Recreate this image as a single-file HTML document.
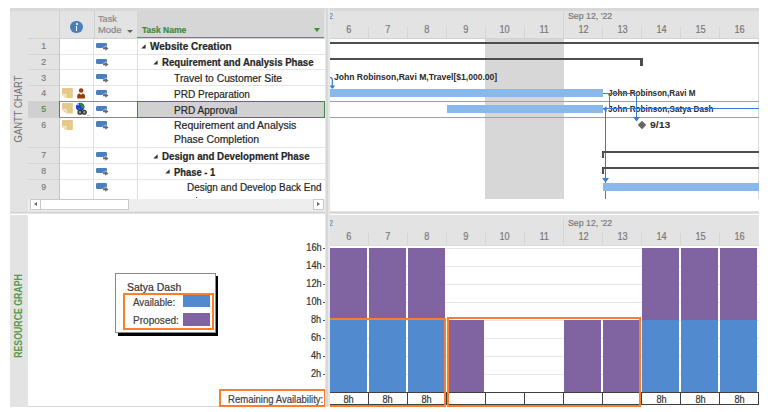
<!DOCTYPE html>
<html><head><meta charset="utf-8"><style>
html,body{margin:0;padding:0;background:#fff;}
#root{position:relative;width:768px;height:412px;overflow:hidden;background:#fff;font-family:"Liberation Sans",sans-serif;}
#root>div,#root>svg{position:absolute;white-space:nowrap;}
</style></head><body><div id="root">
<div style="left:10.00px;top:8.00px;width:749.00px;height:203.00px;background:#e3e3e3;"></div>
<div style="left:10.00px;top:8.00px;width:749.00px;height:2.50px;background:#d9d9d9;"></div>
<div style="left:-16.37px;top:99.40px;width:70.75px;height:20px;line-height:20px;font-size:10px;font-weight:400;color:#707070;text-align:center;transform-origin:50% 50%;transform:rotate(-90deg) scaleX(0.9442);">GANTT CHART</div>
<div style="left:59.00px;top:38.50px;width:266.00px;height:160.00px;background:#ffffff;"></div>
<div style="left:59.00px;top:10.50px;width:1.00px;height:28.00px;background:#d0d0d0;"></div>
<div style="left:93.50px;top:10.50px;width:1.00px;height:28.00px;background:#d0d0d0;"></div>
<div style="left:137.30px;top:10.50px;width:187.20px;height:28.00px;background:#d6d6d6;"></div>
<div style="left:137.30px;top:36.80px;width:187.20px;height:2.00px;background:#4c9a4c;"></div>
<div style="left:28.00px;top:38.00px;width:109.30px;height:1.00px;background:#cfcfcf;"></div>
<div style="left:28.00px;top:53.70px;width:31.00px;height:1.00px;background:#d4d4d4;"></div>
<div style="left:59.00px;top:53.70px;width:266.00px;height:1.00px;background:#e6e6e6;"></div>
<div style="left:28.00px;top:69.40px;width:31.00px;height:1.00px;background:#d4d4d4;"></div>
<div style="left:59.00px;top:69.40px;width:266.00px;height:1.00px;background:#e6e6e6;"></div>
<div style="left:28.00px;top:85.10px;width:31.00px;height:1.00px;background:#d4d4d4;"></div>
<div style="left:59.00px;top:85.10px;width:266.00px;height:1.00px;background:#e6e6e6;"></div>
<div style="left:28.00px;top:100.80px;width:31.00px;height:1.00px;background:#d4d4d4;"></div>
<div style="left:59.00px;top:100.80px;width:266.00px;height:1.00px;background:#e6e6e6;"></div>
<div style="left:28.00px;top:116.60px;width:31.00px;height:1.00px;background:#d4d4d4;"></div>
<div style="left:59.00px;top:116.60px;width:266.00px;height:1.00px;background:#e6e6e6;"></div>
<div style="left:28.00px;top:147.30px;width:31.00px;height:1.00px;background:#d4d4d4;"></div>
<div style="left:59.00px;top:147.30px;width:266.00px;height:1.00px;background:#e6e6e6;"></div>
<div style="left:28.00px;top:162.90px;width:31.00px;height:1.00px;background:#d4d4d4;"></div>
<div style="left:59.00px;top:162.90px;width:266.00px;height:1.00px;background:#e6e6e6;"></div>
<div style="left:28.00px;top:178.70px;width:31.00px;height:1.00px;background:#d4d4d4;"></div>
<div style="left:59.00px;top:178.70px;width:266.00px;height:1.00px;background:#e6e6e6;"></div>
<div style="left:59.00px;top:38.50px;width:1.00px;height:160.00px;background:#c5c5c5;"></div>
<div style="left:93.00px;top:38.50px;width:1.00px;height:160.00px;background:#dedede;"></div>
<div style="left:136.80px;top:38.50px;width:1.00px;height:160.00px;background:#dedede;"></div>
<div style="left:28.00px;top:101.30px;width:31.00px;height:15.80px;background:#d0d0d0;"></div>
<div style="left:59.00px;top:100.90px;width:78.00px;height:1.00px;background:#8a8a8a;"></div>
<div style="left:59.00px;top:116.70px;width:78.00px;height:1.00px;background:#8a8a8a;"></div>
<div style="left:58.70px;top:101.30px;width:1.60px;height:16.10px;background:#3e8e3e;"></div>
<div style="left:136.80px;top:100.90px;width:188.20px;height:17.30px;background:#d1d1d1;box-sizing:border-box;border:1.8px solid #418541;"></div>
<div style="left:97.50px;top:9.00px;height:20px;line-height:20px;font-size:9.024400000000002px;font-weight:400;color:#8a8a8a;transform-origin:0 50%;transform:scaleX(1.0240);-webkit-text-stroke:0.2px #8a8a8a;">Task</div>
<div style="left:97.50px;top:20.00px;height:20px;line-height:20px;font-size:9.024400000000002px;font-weight:400;color:#8a8a8a;transform-origin:0 50%;transform:scaleX(1.0411);-webkit-text-stroke:0.2px #8a8a8a;">Mode</div>
<div style="left:127.4px;top:29.8px;width:0;height:0;border-left:3px solid transparent;border-right:3px solid transparent;border-top:3.5px solid #606060;"></div>
<div style="left:142.00px;top:20.00px;height:20px;line-height:20px;font-size:8.6px;font-weight:700;color:#3f8a3f;transform-origin:0 50%;transform:scaleX(0.9872);-webkit-text-stroke:0.2px #3f8a3f;">Task Name</div>
<div style="left:313.5px;top:28px;width:0;height:0;border-left:3.5px solid transparent;border-right:3.5px solid transparent;border-top:4px solid #3f8f3f;"></div>
<div style="left:70.4px;top:20.6px;width:12.4px;height:12.4px;border-radius:50%;background:#4a7fbe;"></div>
<div style="left:75.5px;top:23.3px;width:2.2px;height:1.9px;border-radius:0.8px;background:#fff;"></div>
<div style="left:75.8px;top:26.3px;width:1.7px;height:4.8px;background:#fff;"></div>
<div style="left:41.49px;top:36.00px;width:5.42px;height:20px;line-height:20px;font-size:9.74225px;font-weight:400;color:#7c7c7c;transform-origin:50% 50%;transform:scaleX(0.9000);text-align:center;-webkit-text-stroke:0.2px #7c7c7c;">1</div>
<div style="left:41.49px;top:52.00px;width:5.42px;height:20px;line-height:20px;font-size:9.74225px;font-weight:400;color:#7c7c7c;transform-origin:50% 50%;transform:scaleX(0.9000);text-align:center;-webkit-text-stroke:0.2px #7c7c7c;">2</div>
<div style="left:41.49px;top:68.00px;width:5.42px;height:20px;line-height:20px;font-size:9.74225px;font-weight:400;color:#7c7c7c;transform-origin:50% 50%;transform:scaleX(0.9000);text-align:center;-webkit-text-stroke:0.2px #7c7c7c;">3</div>
<div style="left:41.49px;top:83.00px;width:5.42px;height:20px;line-height:20px;font-size:9.74225px;font-weight:400;color:#7c7c7c;transform-origin:50% 50%;transform:scaleX(0.9000);text-align:center;-webkit-text-stroke:0.2px #7c7c7c;">4</div>
<div style="left:41.49px;top:99.00px;width:5.42px;height:20px;line-height:20px;font-size:9.74225px;font-weight:400;color:#4e8a3a;transform-origin:50% 50%;transform:scaleX(0.9000);text-align:center;-webkit-text-stroke:0.2px #4e8a3a;">5</div>
<div style="left:41.49px;top:115.00px;width:5.42px;height:20px;line-height:20px;font-size:9.74225px;font-weight:400;color:#7c7c7c;transform-origin:50% 50%;transform:scaleX(0.9000);text-align:center;-webkit-text-stroke:0.2px #7c7c7c;">6</div>
<div style="left:41.49px;top:145.00px;width:5.42px;height:20px;line-height:20px;font-size:9.74225px;font-weight:400;color:#7c7c7c;transform-origin:50% 50%;transform:scaleX(0.9000);text-align:center;-webkit-text-stroke:0.2px #7c7c7c;">7</div>
<div style="left:41.49px;top:161.00px;width:5.42px;height:20px;line-height:20px;font-size:9.74225px;font-weight:400;color:#7c7c7c;transform-origin:50% 50%;transform:scaleX(0.9000);text-align:center;-webkit-text-stroke:0.2px #7c7c7c;">8</div>
<div style="left:41.49px;top:177.00px;width:5.42px;height:20px;line-height:20px;font-size:9.74225px;font-weight:400;color:#7c7c7c;transform-origin:50% 50%;transform:scaleX(0.9000);text-align:center;-webkit-text-stroke:0.2px #7c7c7c;">9</div>
<div style="left:95.9px;top:42.90px;width:11px;height:5.2px;border-radius:1.3px;background:#4a7fbf;"></div>
<svg style="left:101.7px;top:45.30px;" width="7.5" height="6.8" viewBox="0 0 7.5 6.8"><path d="M1 2.35H3.3V1L6.5 3.4L3.3 5.8V4.35H1Z" fill="#6a6a6a" stroke="#fff" stroke-width="0.9" paint-order="stroke" stroke-linejoin="round"/></svg>
<div style="left:95.9px;top:58.60px;width:11px;height:5.2px;border-radius:1.3px;background:#4a7fbf;"></div>
<svg style="left:101.7px;top:61.00px;" width="7.5" height="6.8" viewBox="0 0 7.5 6.8"><path d="M1 2.35H3.3V1L6.5 3.4L3.3 5.8V4.35H1Z" fill="#6a6a6a" stroke="#fff" stroke-width="0.9" paint-order="stroke" stroke-linejoin="round"/></svg>
<div style="left:95.9px;top:74.30px;width:11px;height:5.2px;border-radius:1.3px;background:#4a7fbf;"></div>
<svg style="left:101.7px;top:76.70px;" width="7.5" height="6.8" viewBox="0 0 7.5 6.8"><path d="M1 2.35H3.3V1L6.5 3.4L3.3 5.8V4.35H1Z" fill="#6a6a6a" stroke="#fff" stroke-width="0.9" paint-order="stroke" stroke-linejoin="round"/></svg>
<div style="left:95.9px;top:90.00px;width:11px;height:5.2px;border-radius:1.3px;background:#4a7fbf;"></div>
<svg style="left:101.7px;top:92.40px;" width="7.5" height="6.8" viewBox="0 0 7.5 6.8"><path d="M1 2.35H3.3V1L6.5 3.4L3.3 5.8V4.35H1Z" fill="#6a6a6a" stroke="#fff" stroke-width="0.9" paint-order="stroke" stroke-linejoin="round"/></svg>
<div style="left:95.9px;top:105.70px;width:11px;height:5.2px;border-radius:1.3px;background:#4a7fbf;"></div>
<svg style="left:101.7px;top:108.10px;" width="7.5" height="6.8" viewBox="0 0 7.5 6.8"><path d="M1 2.35H3.3V1L6.5 3.4L3.3 5.8V4.35H1Z" fill="#6a6a6a" stroke="#fff" stroke-width="0.9" paint-order="stroke" stroke-linejoin="round"/></svg>
<div style="left:95.9px;top:121.40px;width:11px;height:5.2px;border-radius:1.3px;background:#4a7fbf;"></div>
<svg style="left:101.7px;top:123.80px;" width="7.5" height="6.8" viewBox="0 0 7.5 6.8"><path d="M1 2.35H3.3V1L6.5 3.4L3.3 5.8V4.35H1Z" fill="#6a6a6a" stroke="#fff" stroke-width="0.9" paint-order="stroke" stroke-linejoin="round"/></svg>
<div style="left:95.9px;top:152.10px;width:11px;height:5.2px;border-radius:1.3px;background:#4a7fbf;"></div>
<svg style="left:101.7px;top:154.50px;" width="7.5" height="6.8" viewBox="0 0 7.5 6.8"><path d="M1 2.35H3.3V1L6.5 3.4L3.3 5.8V4.35H1Z" fill="#6a6a6a" stroke="#fff" stroke-width="0.9" paint-order="stroke" stroke-linejoin="round"/></svg>
<div style="left:95.9px;top:167.80px;width:11px;height:5.2px;border-radius:1.3px;background:#4a7fbf;"></div>
<svg style="left:101.7px;top:170.20px;" width="7.5" height="6.8" viewBox="0 0 7.5 6.8"><path d="M1 2.35H3.3V1L6.5 3.4L3.3 5.8V4.35H1Z" fill="#6a6a6a" stroke="#fff" stroke-width="0.9" paint-order="stroke" stroke-linejoin="round"/></svg>
<div style="left:95.9px;top:183.40px;width:11px;height:5.2px;border-radius:1.3px;background:#4a7fbf;"></div>
<svg style="left:101.7px;top:185.80px;" width="7.5" height="6.8" viewBox="0 0 7.5 6.8"><path d="M1 2.35H3.3V1L6.5 3.4L3.3 5.8V4.35H1Z" fill="#6a6a6a" stroke="#fff" stroke-width="0.9" paint-order="stroke" stroke-linejoin="round"/></svg>
<svg style="left:62.1px;top:87.9px;" width="11" height="10.6" viewBox="0 0 11 10.6"><path d="M0 0H10.8V10.4H3.9L0 6.6Z" fill="#e6c88a"/><path d="M0.7 6.7H4V10.1" fill="none" stroke="#fff" stroke-width="0.9"/></svg>
<svg style="left:62.1px;top:103.3px;" width="11" height="10.6" viewBox="0 0 11 10.6"><path d="M0 0H10.8V10.4H3.9L0 6.6Z" fill="#e6c88a"/><path d="M0.7 6.7H4V10.1" fill="none" stroke="#fff" stroke-width="0.9"/></svg>
<svg style="left:62.1px;top:119.8px;" width="11" height="10.6" viewBox="0 0 11 10.6"><path d="M0 0H10.8V10.4H3.9L0 6.6Z" fill="#e6c88a"/><path d="M0.7 6.7H4V10.1" fill="none" stroke="#fff" stroke-width="0.9"/></svg>
<svg style="left:77px;top:87.6px;" width="9" height="11" viewBox="0 0 9 11"><circle cx="4.1" cy="2.6" r="2.25" fill="#9e3a0a"/><path d="M0.2 9.4V8.2Q0.2 5.6 2.9 5.4L4.1 6.9L5.3 5.4Q8 5.6 8 8.2V9.4Q8 10.6 6.6 10.6H1.6Q0.2 10.6 0.2 9.4Z" fill="#9e3a0a"/></svg>
<svg style="left:74.5px;top:102px;" width="13" height="15" viewBox="0 0 13 15"><circle cx="5.15" cy="5" r="4.3" fill="#2233ee"/><path d="M4.5 1.2Q7.5 0.6 9.2 3.6Q9.6 5.5 8.8 6.8Q7.6 6.2 6.6 6.6Q5.2 5.6 6.2 4.4Q4.8 3.6 4.5 1.2Z" fill="#2f8a2a"/><path d="M3.4 4.8Q4.6 5.8 5.8 7.2Q5 8.6 3.4 8.2Q2.6 6.6 3.4 4.8Z" fill="#3a8a30" opacity="0.7"/><circle cx="3" cy="2.4" r="1.1" fill="#c8d8ff" opacity="0.8"/><circle cx="4.9" cy="10.2" r="1.9" fill="#9a9a9a" stroke="#333" stroke-width="1.3"/><circle cx="9.3" cy="10.2" r="1.9" fill="#9a9a9a" stroke="#333" stroke-width="1.3"/><path d="M6.8 10.2H7.4" stroke="#3c3c3c" stroke-width="1.2"/></svg>
<div style="left:87px;top:115px;width:3.3px;height:1.2px;background:#c4c4c4;"></div>
<svg style="left:141.3px;top:44.3px;" width="5" height="5" viewBox="0 0 5 5"><path d="M4.6 0.3V4.6H0.3Z" fill="#303030"/></svg>
<div style="left:150.20px;top:37.00px;height:20px;line-height:20px;font-size:10.049900000000001px;font-weight:700;color:#262626;transform-origin:0 50%;transform:scaleX(0.9988);-webkit-text-stroke:0.2px #262626;">Website Creation</div>
<svg style="left:153px;top:60px;" width="5" height="5" viewBox="0 0 5 5"><path d="M4.6 0.3V4.6H0.3Z" fill="#303030"/></svg>
<div style="left:162.20px;top:53.00px;height:20px;line-height:20px;font-size:10.049900000000001px;font-weight:700;color:#262626;transform-origin:0 50%;transform:scaleX(0.9593);-webkit-text-stroke:0.2px #262626;">Requirement and Analysis Phase</div>
<div style="left:174.20px;top:69.00px;height:20px;line-height:20px;font-size:10.049900000000001px;font-weight:400;color:#262626;transform-origin:0 50%;transform:scaleX(1.0297);-webkit-text-stroke:0.2px #262626;">Travel to Customer Site</div>
<div style="left:174.20px;top:85.00px;height:20px;line-height:20px;font-size:10.049900000000001px;font-weight:400;color:#262626;transform-origin:0 50%;transform:scaleX(1.0018);-webkit-text-stroke:0.2px #262626;">PRD Preparation</div>
<div style="left:174.20px;top:101.00px;height:20px;line-height:20px;font-size:10.049900000000001px;font-weight:400;color:#262626;transform-origin:0 50%;transform:scaleX(1.0029);-webkit-text-stroke:0.2px #262626;">PRD Approval</div>
<div style="left:174.20px;top:116.00px;height:20px;line-height:20px;font-size:10.049900000000001px;font-weight:400;color:#262626;transform-origin:0 50%;transform:scaleX(1.0493);-webkit-text-stroke:0.2px #262626;">Requirement and Analysis</div>
<div style="left:174.20px;top:130.00px;height:20px;line-height:20px;font-size:10.049900000000001px;font-weight:400;color:#262626;transform-origin:0 50%;transform:scaleX(1.0375);-webkit-text-stroke:0.2px #262626;">Phase Completion</div>
<svg style="left:153px;top:153.8px;" width="5" height="5" viewBox="0 0 5 5"><path d="M4.6 0.3V4.6H0.3Z" fill="#303030"/></svg>
<div style="left:162.00px;top:147.00px;height:20px;line-height:20px;font-size:10.049900000000001px;font-weight:700;color:#262626;transform-origin:0 50%;transform:scaleX(0.9695);-webkit-text-stroke:0.2px #262626;">Design and Development Phase</div>
<svg style="left:165px;top:169.4px;" width="5" height="5" viewBox="0 0 5 5"><path d="M4.6 0.3V4.6H0.3Z" fill="#303030"/></svg>
<div style="left:174.20px;top:163.00px;height:20px;line-height:20px;font-size:10.049900000000001px;font-weight:700;color:#262626;transform-origin:0 50%;transform:scaleX(0.9359);-webkit-text-stroke:0.2px #262626;">Phase - 1</div>
<div style="left:186.80px;top:178.00px;height:20px;line-height:20px;font-size:10.049900000000001px;font-weight:400;color:#262626;transform-origin:0 50%;transform:scaleX(0.9882);-webkit-text-stroke:0.2px #262626;">Design and Develop Back End</div>
<div style="left:196px;top:196.6px;width:1.2px;height:1.2px;background:#555;"></div>
<div style="left:28.00px;top:198.50px;width:297.00px;height:12.50px;background:#eeeeee;"></div>
<div style="left:29.90px;top:198.80px;width:11.00px;height:11.60px;background:#ffffff;box-sizing:border-box;border:1px solid #c9c9c9;"></div>
<div style="left:33.8px;top:202px;width:0;height:0;border-top:2.6px solid transparent;border-bottom:2.6px solid transparent;border-right:3.2px solid #666;"></div>
<div style="left:40.40px;top:198.80px;width:88.40px;height:11.60px;background:#ffffff;box-sizing:border-box;border:1px solid #c9c9c9;"></div>
<div style="left:313.00px;top:198.80px;width:11.00px;height:11.60px;background:#ffffff;box-sizing:border-box;border:1px solid #c9c9c9;"></div>
<div style="left:317.2px;top:201.8px;width:0;height:0;border-top:2.9px solid transparent;border-bottom:2.9px solid transparent;border-left:3.3px solid #666;"></div>
<div style="left:329.37px;top:38.50px;width:429.63px;height:172.70px;background:#ffffff;"></div>
<div style="left:28.00px;top:37.60px;width:297.30px;height:1.00px;background:#d2d2d2;"></div>
<div style="left:329.37px;top:37.60px;width:429.63px;height:1.00px;background:#d2d2d2;"></div>
<div style="left:485.49px;top:38.50px;width:78.06px;height:160.00px;background:#d7d7d7;"></div>
<div style="left:758.00px;top:38.50px;width:1.00px;height:160.00px;background:#dcdcdc;"></div>
<div style="left:346.10px;top:20.00px;width:5.56px;height:20px;line-height:20px;font-size:10.0px;font-weight:400;color:#7a7a7a;transform-origin:50% 50%;transform:scaleX(0.9200);text-align:center;-webkit-text-stroke:0.2px #7a7a7a;">6</div>
<div style="left:385.13px;top:20.00px;width:5.56px;height:20px;line-height:20px;font-size:10.0px;font-weight:400;color:#7a7a7a;transform-origin:50% 50%;transform:scaleX(0.9200);text-align:center;-webkit-text-stroke:0.2px #7a7a7a;">7</div>
<div style="left:367.90px;top:26.50px;width:1.00px;height:11.50px;background:#d5d5d5;"></div>
<div style="left:424.16px;top:20.00px;width:5.56px;height:20px;line-height:20px;font-size:10.0px;font-weight:400;color:#7a7a7a;transform-origin:50% 50%;transform:scaleX(0.9200);text-align:center;-webkit-text-stroke:0.2px #7a7a7a;">8</div>
<div style="left:406.93px;top:26.50px;width:1.00px;height:11.50px;background:#d5d5d5;"></div>
<div style="left:463.19px;top:20.00px;width:5.56px;height:20px;line-height:20px;font-size:10.0px;font-weight:400;color:#7a7a7a;transform-origin:50% 50%;transform:scaleX(0.9200);text-align:center;-webkit-text-stroke:0.2px #7a7a7a;">9</div>
<div style="left:445.96px;top:26.50px;width:1.00px;height:11.50px;background:#d5d5d5;"></div>
<div style="left:499.44px;top:20.00px;width:11.12px;height:20px;line-height:20px;font-size:10.0px;font-weight:400;color:#7a7a7a;transform-origin:50% 50%;transform:scaleX(0.9200);text-align:center;-webkit-text-stroke:0.2px #7a7a7a;">10</div>
<div style="left:484.99px;top:26.50px;width:1.00px;height:11.50px;background:#d5d5d5;"></div>
<div style="left:538.85px;top:20.00px;width:10.38px;height:20px;line-height:20px;font-size:10.0px;font-weight:400;color:#7a7a7a;transform-origin:50% 50%;transform:scaleX(0.9200);text-align:center;-webkit-text-stroke:0.2px #7a7a7a;">11</div>
<div style="left:524.02px;top:26.50px;width:1.00px;height:11.50px;background:#d5d5d5;"></div>
<div style="left:577.50px;top:20.00px;width:11.12px;height:20px;line-height:20px;font-size:10.0px;font-weight:400;color:#7a7a7a;transform-origin:50% 50%;transform:scaleX(0.9200);text-align:center;-webkit-text-stroke:0.2px #7a7a7a;">12</div>
<div style="left:563.05px;top:26.50px;width:1.00px;height:11.50px;background:#d5d5d5;"></div>
<div style="left:616.53px;top:20.00px;width:11.12px;height:20px;line-height:20px;font-size:10.0px;font-weight:400;color:#7a7a7a;transform-origin:50% 50%;transform:scaleX(0.9200);text-align:center;-webkit-text-stroke:0.2px #7a7a7a;">13</div>
<div style="left:602.08px;top:26.50px;width:1.00px;height:11.50px;background:#d5d5d5;"></div>
<div style="left:655.56px;top:20.00px;width:11.12px;height:20px;line-height:20px;font-size:10.0px;font-weight:400;color:#7a7a7a;transform-origin:50% 50%;transform:scaleX(0.9200);text-align:center;-webkit-text-stroke:0.2px #7a7a7a;">14</div>
<div style="left:641.11px;top:26.50px;width:1.00px;height:11.50px;background:#d5d5d5;"></div>
<div style="left:694.59px;top:20.00px;width:11.12px;height:20px;line-height:20px;font-size:10.0px;font-weight:400;color:#7a7a7a;transform-origin:50% 50%;transform:scaleX(0.9200);text-align:center;-webkit-text-stroke:0.2px #7a7a7a;">15</div>
<div style="left:680.14px;top:26.50px;width:1.00px;height:11.50px;background:#d5d5d5;"></div>
<div style="left:733.62px;top:20.00px;width:11.12px;height:20px;line-height:20px;font-size:10.0px;font-weight:400;color:#7a7a7a;transform-origin:50% 50%;transform:scaleX(0.9200);text-align:center;-webkit-text-stroke:0.2px #7a7a7a;">16</div>
<div style="left:719.17px;top:26.50px;width:1.00px;height:11.50px;background:#d5d5d5;"></div>
<div style="left:563.05px;top:12.00px;width:1.00px;height:26.00px;background:#d5d5d5;"></div>
<div style="left:567.60px;top:6.00px;height:20px;line-height:20px;font-size:9.2px;font-weight:400;color:#7a7a7a;transform-origin:0 50%;transform:scaleX(0.9555);-webkit-text-stroke:0.2px #7a7a7a;">Sep 12, '22</div>
<div style="left:329.40px;top:6.00px;height:20px;line-height:20px;font-size:9.2px;font-weight:400;color:#7a8aa0;transform-origin:0 50%;transform:scaleX(0.7819);-webkit-text-stroke:0.2px #7a8aa0;">2</div>
<div style="left:329.37px;top:41.80px;width:429.63px;height:2.00px;background:#4d4d4d;"></div>
<div style="left:329.37px;top:57.80px;width:313.43px;height:2.00px;background:#4d4d4d;"></div>
<div style="left:640.40px;top:57.80px;width:2.40px;height:8.20px;background:#4d4d4d;"></div>
<div style="left:334.20px;top:67.00px;height:20px;line-height:20px;font-size:9.600200000000001px;font-weight:700;color:#2a2a2a;transform-origin:0 50%;transform:scaleX(0.8924);">John Robinson,Ravi M,Travel[$1,000.00]</div>
<div style="left:329.37px;top:89.20px;width:273.63px;height:7.80px;background:#8ab8ea;"></div>
<div style="left:329.37px;top:101.00px;width:429.63px;height:1.00px;background:#a0a0a0;"></div>
<div style="left:329.37px;top:116.60px;width:429.63px;height:1.00px;background:#a0a0a0;"></div>
<div style="left:446.60px;top:105.20px;width:156.40px;height:7.80px;background:#8ab8ea;"></div>
<div style="left:607.50px;top:83.00px;height:20px;line-height:20px;font-size:9.600200000000001px;font-weight:700;color:#2a2a2a;transform-origin:0 50%;transform:scaleX(0.8457);">John Robinson,Ravi M</div>
<div style="left:607.50px;top:99.00px;height:20px;line-height:20px;font-size:9.600200000000001px;font-weight:700;color:#2a2a2a;transform-origin:0 50%;transform:scaleX(0.8489);">John Robinson,Satya Dash</div>
<svg style="left:329px;top:74px;" width="8" height="16" viewBox="0 0 8 16"><path d="M0.5 3.3Q3.3 3.3 3.3 5.5V12" fill="none" stroke="#3a7cd0" stroke-width="1.2"/><path d="M0.4 11.4H6.2L3.3 15Z" fill="#3a7cd0"/></svg>
<div style="left:603.00px;top:108.30px;width:156.00px;height:1.00px;background:#3a7cd0;"></div>
<svg style="left:602.6px;top:105.9px;" width="4" height="6" viewBox="0 0 4 6"><path d="M0 2.95L3.6 0V5.9Z" fill="#3a7cd0"/></svg>
<div style="left:605.00px;top:110.00px;width:1.00px;height:88.50px;background:#3a7cd0;"></div>
<div style="left:608.70px;top:92.80px;width:1.00px;height:16.00px;background:#3a7cd0;"></div>
<div style="left:636.00px;top:92.80px;width:1.00px;height:25.20px;background:#3a7cd0;"></div>
<div style="left:603.00px;top:92.70px;width:34.00px;height:1.00px;background:#3a7cd0;"></div>
<svg style="left:633.2px;top:117.2px;" width="7" height="5" viewBox="0 0 7 5"><path d="M0 0H7L3.5 4.4Z" fill="#3a7cd0"/></svg>
<svg style="left:602px;top:178px;" width="7" height="5" viewBox="0 0 7 5"><path d="M0 0H7L3.5 4.4Z" fill="#3a7cd0"/></svg>
<div style="left:638.5px;top:122px;width:6px;height:6px;background:#666;transform:rotate(45deg);"></div>
<div style="left:650.20px;top:115.00px;height:20px;line-height:20px;font-size:9.600200000000001px;font-weight:700;color:#2a2a2a;transform-origin:0 50%;transform:scaleX(1.0866);">9/13</div>
<div style="left:602.00px;top:151.40px;width:157.00px;height:2.00px;background:#4d4d4d;"></div>
<div style="left:601.50px;top:151.40px;width:2.30px;height:6.60px;background:#4d4d4d;"></div>
<div style="left:602.00px;top:167.10px;width:157.00px;height:2.00px;background:#4d4d4d;"></div>
<div style="left:601.50px;top:167.10px;width:2.30px;height:6.90px;background:#4d4d4d;"></div>
<div style="left:603.00px;top:183.00px;width:156.00px;height:7.60px;background:#8ab8ea;"></div>
<div style="left:10.00px;top:211.20px;width:749.00px;height:3.30px;background:#e2e2e2;"></div>
<div style="left:10.00px;top:212.30px;width:749.00px;height:1.20px;background:#d4d4d4;"></div>
<div style="left:10.00px;top:214.50px;width:18.00px;height:192.50px;background:#e3e3e3;"></div>
<div style="left:-28.78px;top:306.40px;width:95.57px;height:20px;line-height:20px;font-size:10px;font-weight:700;color:#56984a;text-align:center;transform-origin:50% 50%;transform:rotate(-90deg) scaleX(0.8748);">RESOURCE GRAPH</div>
<div style="left:28.00px;top:214.50px;width:297.30px;height:191.50px;background:#ffffff;"></div>
<div style="left:28.00px;top:405.50px;width:297.30px;height:1.00px;background:#d8d8d8;"></div>
<div style="left:329.37px;top:214.50px;width:429.63px;height:30.50px;background:#e3e3e3;"></div>
<div style="left:329.37px;top:244.60px;width:429.63px;height:1.00px;background:#dadada;"></div>
<div style="left:346.10px;top:227.00px;width:5.56px;height:20px;line-height:20px;font-size:10.0px;font-weight:400;color:#7a7a7a;transform-origin:50% 50%;transform:scaleX(0.9200);text-align:center;-webkit-text-stroke:0.2px #7a7a7a;">6</div>
<div style="left:385.13px;top:227.00px;width:5.56px;height:20px;line-height:20px;font-size:10.0px;font-weight:400;color:#7a7a7a;transform-origin:50% 50%;transform:scaleX(0.9200);text-align:center;-webkit-text-stroke:0.2px #7a7a7a;">7</div>
<div style="left:367.90px;top:233.00px;width:1.00px;height:12.00px;background:#d5d5d5;"></div>
<div style="left:424.16px;top:227.00px;width:5.56px;height:20px;line-height:20px;font-size:10.0px;font-weight:400;color:#7a7a7a;transform-origin:50% 50%;transform:scaleX(0.9200);text-align:center;-webkit-text-stroke:0.2px #7a7a7a;">8</div>
<div style="left:406.93px;top:233.00px;width:1.00px;height:12.00px;background:#d5d5d5;"></div>
<div style="left:463.19px;top:227.00px;width:5.56px;height:20px;line-height:20px;font-size:10.0px;font-weight:400;color:#7a7a7a;transform-origin:50% 50%;transform:scaleX(0.9200);text-align:center;-webkit-text-stroke:0.2px #7a7a7a;">9</div>
<div style="left:445.96px;top:233.00px;width:1.00px;height:12.00px;background:#d5d5d5;"></div>
<div style="left:499.44px;top:227.00px;width:11.12px;height:20px;line-height:20px;font-size:10.0px;font-weight:400;color:#7a7a7a;transform-origin:50% 50%;transform:scaleX(0.9200);text-align:center;-webkit-text-stroke:0.2px #7a7a7a;">10</div>
<div style="left:484.99px;top:233.00px;width:1.00px;height:12.00px;background:#d5d5d5;"></div>
<div style="left:538.85px;top:227.00px;width:10.38px;height:20px;line-height:20px;font-size:10.0px;font-weight:400;color:#7a7a7a;transform-origin:50% 50%;transform:scaleX(0.9200);text-align:center;-webkit-text-stroke:0.2px #7a7a7a;">11</div>
<div style="left:524.02px;top:233.00px;width:1.00px;height:12.00px;background:#d5d5d5;"></div>
<div style="left:577.50px;top:227.00px;width:11.12px;height:20px;line-height:20px;font-size:10.0px;font-weight:400;color:#7a7a7a;transform-origin:50% 50%;transform:scaleX(0.9200);text-align:center;-webkit-text-stroke:0.2px #7a7a7a;">12</div>
<div style="left:563.05px;top:233.00px;width:1.00px;height:12.00px;background:#d5d5d5;"></div>
<div style="left:616.53px;top:227.00px;width:11.12px;height:20px;line-height:20px;font-size:10.0px;font-weight:400;color:#7a7a7a;transform-origin:50% 50%;transform:scaleX(0.9200);text-align:center;-webkit-text-stroke:0.2px #7a7a7a;">13</div>
<div style="left:602.08px;top:233.00px;width:1.00px;height:12.00px;background:#d5d5d5;"></div>
<div style="left:655.56px;top:227.00px;width:11.12px;height:20px;line-height:20px;font-size:10.0px;font-weight:400;color:#7a7a7a;transform-origin:50% 50%;transform:scaleX(0.9200);text-align:center;-webkit-text-stroke:0.2px #7a7a7a;">14</div>
<div style="left:641.11px;top:233.00px;width:1.00px;height:12.00px;background:#d5d5d5;"></div>
<div style="left:694.59px;top:227.00px;width:11.12px;height:20px;line-height:20px;font-size:10.0px;font-weight:400;color:#7a7a7a;transform-origin:50% 50%;transform:scaleX(0.9200);text-align:center;-webkit-text-stroke:0.2px #7a7a7a;">15</div>
<div style="left:680.14px;top:233.00px;width:1.00px;height:12.00px;background:#d5d5d5;"></div>
<div style="left:733.62px;top:227.00px;width:11.12px;height:20px;line-height:20px;font-size:10.0px;font-weight:400;color:#7a7a7a;transform-origin:50% 50%;transform:scaleX(0.9200);text-align:center;-webkit-text-stroke:0.2px #7a7a7a;">16</div>
<div style="left:719.17px;top:233.00px;width:1.00px;height:12.00px;background:#d5d5d5;"></div>
<div style="left:563.05px;top:218.50px;width:1.00px;height:26.50px;background:#d5d5d5;"></div>
<div style="left:567.60px;top:213.00px;height:20px;line-height:20px;font-size:9.2px;font-weight:400;color:#7a7a7a;transform-origin:0 50%;transform:scaleX(0.9555);-webkit-text-stroke:0.2px #7a7a7a;">Sep 12, '22</div>
<div style="left:329.40px;top:213.00px;height:20px;line-height:20px;font-size:9.2px;font-weight:400;color:#7a8aa0;transform-origin:0 50%;transform:scaleX(0.7819);-webkit-text-stroke:0.2px #7a8aa0;">2</div>
<div style="left:329.37px;top:245.60px;width:429.63px;height:160.40px;background:#ffffff;"></div>
<div style="left:329.37px;top:247.50px;width:429.63px;height:1.00px;background:#e6e6e6;"></div>
<div style="left:329.37px;top:265.50px;width:429.63px;height:1.00px;background:#e6e6e6;"></div>
<div style="left:329.37px;top:283.50px;width:429.63px;height:1.00px;background:#e6e6e6;"></div>
<div style="left:329.37px;top:301.50px;width:429.63px;height:1.00px;background:#e6e6e6;"></div>
<div style="left:329.37px;top:319.50px;width:429.63px;height:1.00px;background:#e6e6e6;"></div>
<div style="left:329.37px;top:337.50px;width:429.63px;height:1.00px;background:#e6e6e6;"></div>
<div style="left:329.37px;top:355.50px;width:429.63px;height:1.00px;background:#e6e6e6;"></div>
<div style="left:329.37px;top:373.50px;width:429.63px;height:1.00px;background:#e6e6e6;"></div>
<div style="left:329.87px;top:248.00px;width:37.03px;height:72.00px;background:#8064a2;"></div>
<div style="left:329.87px;top:320.00px;width:37.03px;height:72.00px;background:#528ad0;"></div>
<div style="left:368.90px;top:248.00px;width:37.03px;height:72.00px;background:#8064a2;"></div>
<div style="left:368.90px;top:320.00px;width:37.03px;height:72.00px;background:#528ad0;"></div>
<div style="left:407.93px;top:248.00px;width:37.03px;height:72.00px;background:#8064a2;"></div>
<div style="left:407.93px;top:320.00px;width:37.03px;height:72.00px;background:#528ad0;"></div>
<div style="left:642.11px;top:248.00px;width:37.03px;height:72.00px;background:#8064a2;"></div>
<div style="left:642.11px;top:320.00px;width:37.03px;height:72.00px;background:#528ad0;"></div>
<div style="left:681.14px;top:248.00px;width:37.03px;height:72.00px;background:#8064a2;"></div>
<div style="left:681.14px;top:320.00px;width:37.03px;height:72.00px;background:#528ad0;"></div>
<div style="left:720.17px;top:248.00px;width:37.03px;height:72.00px;background:#8064a2;"></div>
<div style="left:720.17px;top:320.00px;width:37.03px;height:72.00px;background:#528ad0;"></div>
<div style="left:446.96px;top:320.00px;width:37.03px;height:72.00px;background:#8064a2;"></div>
<div style="left:564.05px;top:320.00px;width:37.03px;height:72.00px;background:#8064a2;"></div>
<div style="left:603.08px;top:320.00px;width:37.03px;height:72.00px;background:#8064a2;"></div>
<div style="left:304.82px;top:238.00px;width:16.68px;text-align:right;height:20px;line-height:20px;font-size:10.0px;font-weight:400;color:#333;transform-origin:100% 50%;transform:scaleX(0.9200);-webkit-text-stroke:0.2px #333;">16h</div>
<div style="left:323.40px;top:248.10px;width:2.40px;height:1.20px;background:#555;"></div>
<div style="left:304.82px;top:256.00px;width:16.68px;text-align:right;height:20px;line-height:20px;font-size:10.0px;font-weight:400;color:#333;transform-origin:100% 50%;transform:scaleX(0.9200);-webkit-text-stroke:0.2px #333;">14h</div>
<div style="left:323.40px;top:266.10px;width:2.40px;height:1.20px;background:#555;"></div>
<div style="left:304.82px;top:274.00px;width:16.68px;text-align:right;height:20px;line-height:20px;font-size:10.0px;font-weight:400;color:#333;transform-origin:100% 50%;transform:scaleX(0.9200);-webkit-text-stroke:0.2px #333;">12h</div>
<div style="left:323.40px;top:284.10px;width:2.40px;height:1.20px;background:#555;"></div>
<div style="left:304.82px;top:292.00px;width:16.68px;text-align:right;height:20px;line-height:20px;font-size:10.0px;font-weight:400;color:#333;transform-origin:100% 50%;transform:scaleX(0.9200);-webkit-text-stroke:0.2px #333;">10h</div>
<div style="left:323.40px;top:302.10px;width:2.40px;height:1.20px;background:#555;"></div>
<div style="left:310.38px;top:310.00px;width:11.12px;text-align:right;height:20px;line-height:20px;font-size:10.0px;font-weight:400;color:#333;transform-origin:100% 50%;transform:scaleX(0.9200);-webkit-text-stroke:0.2px #333;">8h</div>
<div style="left:323.40px;top:320.10px;width:2.40px;height:1.20px;background:#555;"></div>
<div style="left:310.38px;top:328.00px;width:11.12px;text-align:right;height:20px;line-height:20px;font-size:10.0px;font-weight:400;color:#333;transform-origin:100% 50%;transform:scaleX(0.9200);-webkit-text-stroke:0.2px #333;">6h</div>
<div style="left:323.40px;top:338.10px;width:2.40px;height:1.20px;background:#555;"></div>
<div style="left:310.38px;top:346.00px;width:11.12px;text-align:right;height:20px;line-height:20px;font-size:10.0px;font-weight:400;color:#333;transform-origin:100% 50%;transform:scaleX(0.9200);-webkit-text-stroke:0.2px #333;">4h</div>
<div style="left:323.40px;top:356.10px;width:2.40px;height:1.20px;background:#555;"></div>
<div style="left:310.38px;top:364.00px;width:11.12px;text-align:right;height:20px;line-height:20px;font-size:10.0px;font-weight:400;color:#333;transform-origin:100% 50%;transform:scaleX(0.9200);-webkit-text-stroke:0.2px #333;">2h</div>
<div style="left:323.40px;top:374.10px;width:2.40px;height:1.20px;background:#555;"></div>
<div style="left:329.37px;top:392.00px;width:429.63px;height:1.00px;background:#404040;"></div>
<div style="left:329.37px;top:404.30px;width:429.63px;height:1.00px;background:#404040;"></div>
<div style="left:328.87px;top:392.00px;width:1.00px;height:13.00px;background:#404040;"></div>
<div style="left:367.90px;top:392.00px;width:1.00px;height:13.00px;background:#404040;"></div>
<div style="left:406.93px;top:392.00px;width:1.00px;height:13.00px;background:#404040;"></div>
<div style="left:445.96px;top:392.00px;width:1.00px;height:13.00px;background:#404040;"></div>
<div style="left:484.99px;top:392.00px;width:1.00px;height:13.00px;background:#404040;"></div>
<div style="left:524.02px;top:392.00px;width:1.00px;height:13.00px;background:#404040;"></div>
<div style="left:563.05px;top:392.00px;width:1.00px;height:13.00px;background:#404040;"></div>
<div style="left:602.08px;top:392.00px;width:1.00px;height:13.00px;background:#404040;"></div>
<div style="left:641.11px;top:392.00px;width:1.00px;height:13.00px;background:#404040;"></div>
<div style="left:680.14px;top:392.00px;width:1.00px;height:13.00px;background:#404040;"></div>
<div style="left:719.17px;top:392.00px;width:1.00px;height:13.00px;background:#404040;"></div>
<div style="left:758.20px;top:392.00px;width:1.00px;height:13.00px;background:#404040;"></div>
<div style="left:343.32px;top:390.00px;width:11.12px;height:20px;line-height:20px;font-size:10.0px;font-weight:400;color:#333;transform-origin:50% 50%;transform:scaleX(0.9200);text-align:center;-webkit-text-stroke:0.2px #333;">8h</div>
<div style="left:382.35px;top:390.00px;width:11.12px;height:20px;line-height:20px;font-size:10.0px;font-weight:400;color:#333;transform-origin:50% 50%;transform:scaleX(0.9200);text-align:center;-webkit-text-stroke:0.2px #333;">8h</div>
<div style="left:421.38px;top:390.00px;width:11.12px;height:20px;line-height:20px;font-size:10.0px;font-weight:400;color:#333;transform-origin:50% 50%;transform:scaleX(0.9200);text-align:center;-webkit-text-stroke:0.2px #333;">8h</div>
<div style="left:655.56px;top:390.00px;width:11.12px;height:20px;line-height:20px;font-size:10.0px;font-weight:400;color:#333;transform-origin:50% 50%;transform:scaleX(0.9200);text-align:center;-webkit-text-stroke:0.2px #333;">8h</div>
<div style="left:694.59px;top:390.00px;width:11.12px;height:20px;line-height:20px;font-size:10.0px;font-weight:400;color:#333;transform-origin:50% 50%;transform:scaleX(0.9200);text-align:center;-webkit-text-stroke:0.2px #333;">8h</div>
<div style="left:733.62px;top:390.00px;width:11.12px;height:20px;line-height:20px;font-size:10.0px;font-weight:400;color:#333;transform-origin:50% 50%;transform:scaleX(0.9200);text-align:center;-webkit-text-stroke:0.2px #333;">8h</div>
<div style="left:329.37px;top:405.30px;width:429.63px;height:1.20px;background:#ffffff;"></div>
<div style="left:227.60px;top:390.00px;height:20px;line-height:20px;font-size:10.0px;font-weight:400;color:#404040;transform-origin:0 50%;transform:scaleX(0.9533);-webkit-text-stroke:0.2px #404040;">Remaining Availability:</div>
<div style="left:219.30px;top:388.80px;width:106.60px;height:18.20px;box-sizing:border-box;border:2.2px solid #fc7e2a;"></div>
<div style="left:328.20px;top:317.80px;width:117.80px;height:88.80px;box-sizing:border-box;border:2.2px solid #fc7e2a;"></div>
<div style="left:446.90px;top:317.00px;width:194.30px;height:89.60px;box-sizing:border-box;border:2.2px solid #fc7e2a;"></div>
<div style="left:325.30px;top:8.00px;width:4.30px;height:399.00px;background:#e6e6e6;"></div>
<div style="left:326.30px;top:8.00px;width:2.00px;height:399.00px;background:#d8d8d8;"></div>
<div style="left:117.80px;top:276.00px;width:100.20px;height:60.00px;background:#000000;"></div>
<div style="left:115.00px;top:273.20px;width:100.60px;height:60.20px;background:#ffffff;box-sizing:border-box;border:1px solid #8a8a8a;"></div>
<div style="left:127.20px;top:277.00px;height:20px;line-height:20px;font-size:10.5px;font-weight:400;color:#333;transform-origin:0 50%;transform:scaleX(1.0004);-webkit-text-stroke:0.2px #333;">Satya Dash</div>
<div style="left:122.50px;top:292.50px;width:91.50px;height:37.30px;box-sizing:border-box;border:2.2px solid #fc7e2a;"></div>
<div style="left:132.60px;top:293.00px;height:20px;line-height:20px;font-size:10.0px;font-weight:400;color:#404040;transform-origin:0 50%;transform:scaleX(0.9774);-webkit-text-stroke:0.2px #404040;">Available:</div>
<div style="left:132.60px;top:311.00px;height:20px;line-height:20px;font-size:10.0px;font-weight:400;color:#404040;transform-origin:0 50%;transform:scaleX(1.0070);-webkit-text-stroke:0.2px #404040;">Proposed:</div>
<div style="left:183.20px;top:295.00px;width:26.40px;height:12.00px;background:#528ad0;"></div>
<div style="left:183.20px;top:313.20px;width:26.40px;height:12.40px;background:#8064a2;"></div>
</div></body></html>
